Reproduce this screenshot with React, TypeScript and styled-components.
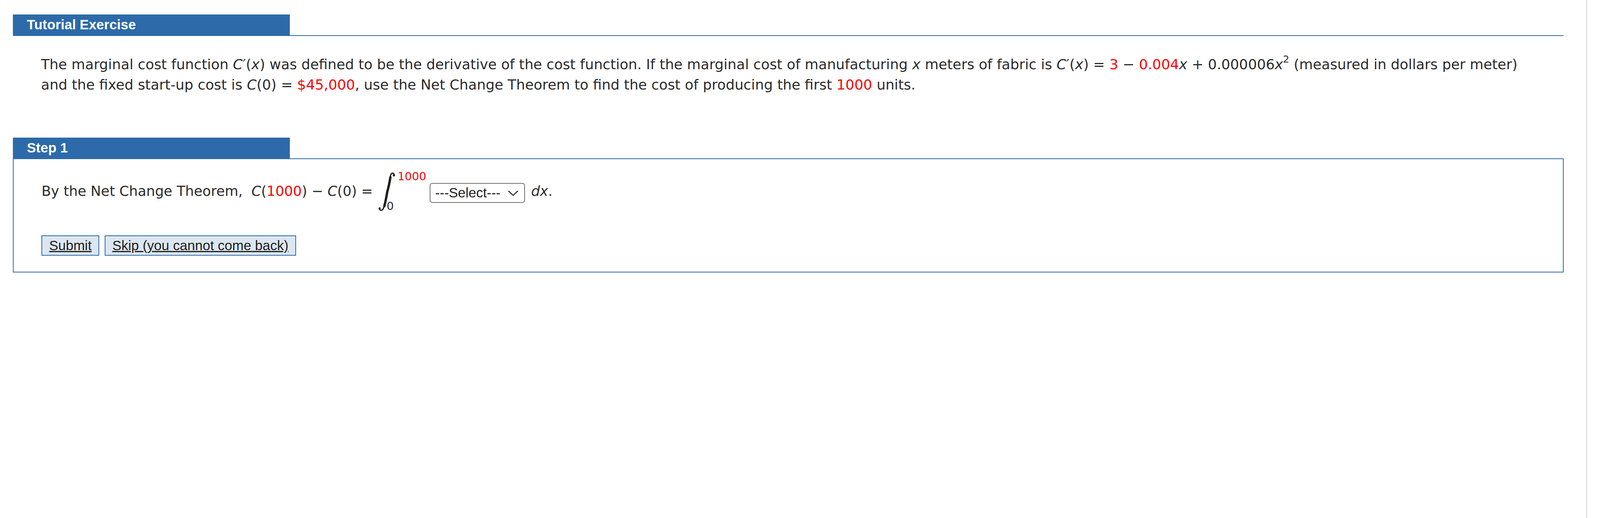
import React, { useEffect, useState } from "react";
import styled, { createGlobalStyle } from "styled-components";

const BLUE = "#2d6aa9";
const TEXT = "#2b2b2b";
const RED = "#ff0000";
const VERDANA = `"DejaVu Sans", Verdana, Tahoma, sans-serif`;
const ARIAL = `"Liberation Sans", Arial, Helvetica, sans-serif`;
const DESIGN_WIDTH = 1560.6;

const GlobalStyle = createGlobalStyle`
  html, body, #root {
    height: 100%;
  }
  html, body {
    margin: 0;
    padding: 0;
    background: #ffffff;
    overflow: hidden;
  }
`;

const Page = styled.div`
  box-sizing: border-box;
  width: 1548px;
  min-height: 100%;
  padding: 14.2px 22px 0 12.7px;
  border-right: 1px solid #d4d4d4;
  background: #ffffff;
`;

const SectionBar = styled.div<{ $gap?: number }>`
  display: flex;
  align-items: flex-end;
  margin-top: ${(p) => p.$gap ?? 0}px;
  border-bottom: 1px solid ${BLUE};
`;

const Tab = styled.div`
  box-sizing: border-box;
  width: 270px;
  height: 20px;
  padding-left: 13.5px;
  background: ${BLUE};
  color: #ffffff;
  font: bold 13.33px/20px ${ARIAL};
  white-space: nowrap;
`;

const Question = styled.p`
  margin: 18px 0 0;
  padding: 0 8px 0 27.3px;
  font: 13.66px/20px ${VERDANA};
  color: ${TEXT};
  white-space: nowrap;
`;

const Var = styled.i`
  font-style: italic;
`;

const Red = styled.span`
  color: ${RED};
`;

const Sup = styled.sup`
  font-size: 9.6px;
  line-height: 0;
  vertical-align: 6.6px;
`;

const StepBody = styled.div`
  display: flex;
  flex-direction: column;
  align-items: flex-start;
  gap: 22.7px;
  padding: 11.5px 20px 15.7px 27px;
  border: 1px solid ${BLUE};
  border-top: 0;
`;

const MathRow = styled.div`
  display: flex;
  align-items: center;
  height: 40px;
  font: 13.5px/20px ${VERDANA};
  color: ${TEXT};
  white-space: pre;
`;

const IntegralSign = styled.svg`
  display: block;
  width: 16px;
  height: 38px;
  margin-left: 5.5px;
  flex: none;
`;

const Limits = styled.span`
  display: flex;
  flex-direction: column;
  justify-content: space-between;
  height: 40px;
  margin-left: 2.6px;
  font: 11px/11px ${VERDANA};
  color: ${TEXT};
`;

const Lower = styled.span`
  margin-left: -10.6px;
`;

const SelectWrap = styled.span`
  position: relative;
  display: inline-flex;
  margin-left: 3.4px;
  margin-top: 3px;
`;

const Select = styled.select`
  appearance: none;
  -webkit-appearance: none;
  box-sizing: border-box;
  width: 93px;
  height: 19.5px;
  margin: 0;
  padding: 0 0 0 4.6px;
  border: 1px solid #6f6f6f;
  border-radius: 2.5px;
  background: #ffffff;
  color: #1f1f1f;
  font: 13.33px/17px ${ARIAL};
`;

const Chevron = styled.svg`
  position: absolute;
  right: 6.5px;
  top: 7.4px;
  width: 10.4px;
  height: 5.4px;
  pointer-events: none;
`;

const Dx = styled.span`
  margin-left: 6px;
`;

const ButtonRow = styled.div`
  display: flex;
  gap: 5.2px;
`;

const Button = styled.button`
  box-sizing: border-box;
  height: 20px;
  margin: 0;
  padding: 0 6.7px;
  border: 1px solid ${BLUE};
  border-radius: 0;
  background: #dce6f1;
  color: #1e1e1e;
  font: 13.33px/18px ${ARIAL};
  text-decoration: underline;
  cursor: pointer;
`;

function useFitZoom() {
  const calc = () =>
    typeof window !== "undefined" && window.innerWidth > 0
      ? window.innerWidth / DESIGN_WIDTH
      : 4.82;
  const [zoom, setZoom] = useState(calc);
  useEffect(() => {
    const onResize = () => setZoom(calc());
    window.addEventListener("resize", onResize);
    return () => window.removeEventListener("resize", onResize);
  }, []);
  return zoom;
}

export default function App() {
  const zoom = useFitZoom();
  return (
    <>
      <GlobalStyle />
      <Page style={{ zoom }}>
        <SectionBar>
          <Tab>Tutorial Exercise</Tab>
        </SectionBar>
        <Question>
          The marginal cost function <Var>C</Var>′(<Var>x</Var>) was defined to be the
          derivative of the cost function. If the marginal cost of manufacturing{" "}
          <Var>x</Var> meters of fabric is <Var>C</Var>′(<Var>x</Var>) = <Red>3</Red> −{" "}
          <Red>0.004</Red>
          <Var>x</Var> + 0.000006<Var>x</Var>
          <Sup>2</Sup> (measured in dollars per meter)
          <br />
          and the fixed start-up cost is <Var>C</Var>(0) = <Red>$45,000</Red>, use the Net
          Change Theorem to find the cost of producing the first <Red>1000</Red> units.
        </Question>

        <SectionBar $gap={41.3}>
          <Tab>Step 1</Tab>
        </SectionBar>
        <StepBody>
          <MathRow>
            <span>By the Net Change Theorem,  </span>
            <span>
              <Var>C</Var>(<Red>1000</Red>) − <Var>C</Var>(0) =
            </span>
            <IntegralSign viewBox="0 0 16 38" aria-hidden="true">
              <path
                d="M15.4 3.4 C15.3 1.2 13.3 0.3 12.2 2.2 C11.1 4.2 10 12 8.6 19 C7.2 26.5 6.2 32.5 4.6 35.8 C3.7 37.8 1.6 37.9 0.7 35.8"
                fill="none"
                stroke="#1e1e1e"
                strokeWidth="1.25"
                strokeLinecap="round"
              />
              <path
                d="M11.6 5 C10.6 11 9.8 15 8.6 19 C7.5 25 6.8 29.5 5.6 33.4"
                fill="none"
                stroke="#1e1e1e"
                strokeWidth="2.3"
                strokeLinecap="round"
              />
              <circle cx="14.9" cy="3.3" r="1" fill="#1e1e1e" />
              <circle cx="1.1" cy="35.4" r="1" fill="#1e1e1e" />
            </IntegralSign>
            <Limits>
              <Red>1000</Red>
              <Lower>0</Lower>
            </Limits>
            <SelectWrap>
              <Select defaultValue="">
                <option value="">---Select---</option>
                <option value="a">3 − 0.004x + 0.000006x²</option>
                <option value="b">45,000</option>
              </Select>
              <Chevron viewBox="0 0 10.4 5.4" aria-hidden="true">
                <path d="M0.6 0.6 L5.2 4.8 L9.8 0.6" fill="none" stroke="#222" strokeWidth="1" />
              </Chevron>
            </SelectWrap>
            <Dx>
              <Var>dx</Var>.
            </Dx>
          </MathRow>
          <ButtonRow>
            <Button type="button">Submit</Button>
            <Button type="button">Skip (you cannot come back)</Button>
          </ButtonRow>
        </StepBody>
      </Page>
    </>
  );
}
